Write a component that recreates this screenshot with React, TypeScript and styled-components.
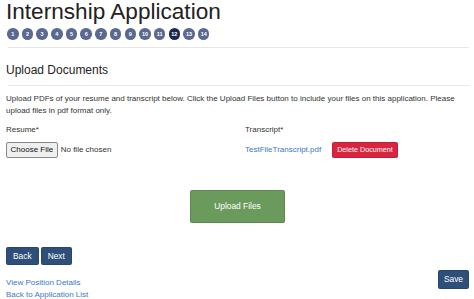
import styled, { createGlobalStyle } from "styled-components"

const GlobalStyle = createGlobalStyle`
  body {
    margin: 0;
    background: #fff;
    font-family: "Liberation Sans", Arial, sans-serif;
    color: #333;
  }
`

const Page = styled.div`
  width: 474px;
  height: 299px;
  overflow: hidden;
  padding: 0 5px 0 6px;
  box-sizing: border-box;
`

const Title = styled.h1`
  margin: 0;
  font-size: 22.6px;
  font-weight: 400;
  line-height: 24px;
  color: #222;
`

const Steps = styled.div`
  display: flex;
  gap: 3.2px;
  margin-top: 4px;
  padding-left: 1px;
`

const Step = styled.span<{ $active?: boolean }>`
  width: 11.5px;
  height: 11.5px;
  border-radius: 50%;
  background: ${(p) => (p.$active ? "#1b2a4c" : "#5a6990")};
  color: #fff;
  font-size: 5.5px;
  font-weight: 700;
  display: flex;
  align-items: center;
  justify-content: center;
`

const Rule = styled.hr`
  border: 0;
  border-top: 1px solid #e6e6e6;
  margin: 0 0 0 2px;
`

const Section = styled.h3`
  margin: 0;
  padding: 16px 0 8px;
  font-size: 12px;
  line-height: 13px;
  font-weight: 400;
  color: #222;
`

const Intro = styled.p`
  margin: 7px 0 0;
  font-size: 8px;
  line-height: 12.5px;
`

const Fields = styled.div`
  display: grid;
  grid-template-columns: 239px 1fr;
  margin-top: 6px;
`

const Field = styled.div`
  display: flex;
  flex-direction: column;
  gap: 6px;
`

const Label = styled.label`
  font-size: 8px;
  line-height: 12px;
`

const Line = styled.div`
  display: flex;
  align-items: center;
  height: 16px;
  font-size: 8px;
`

const ChooseBtn = styled.button`
  height: 16px;
  padding: 0 3.5px;
  font: inherit;
  font-size: 8px;
  background: #efefef;
  border: 1px solid #8a8a8a;
  border-radius: 2px;
  color: #111;
  margin-right: 3px;
`

const FileLink = styled.a`
  color: #3a78c9;
  text-decoration: none;
  margin-right: 11px;
`

const Btn = styled.button<{ $bg: string }>`
  font-family: inherit;
  background: ${(p) => p.$bg};
  color: #fff;
  border: 1px solid rgba(0, 0, 0, 0.12);
  border-radius: 2px;
  font-size: 8.4px;
  padding: 0 6px;
  height: 18px;
`

const DeleteBtn = styled(Btn)`
  height: 16px;
  font-size: 7.2px;
  padding: 0 4px;
`

const Center = styled.div`
  display: flex;
  justify-content: center;
  margin-top: 32px;
`

const UploadBtn = styled(Btn)`
  width: 95px;
  height: 33px;
`

const Nav = styled.div`
  display: flex;
  gap: 2px;
  margin-top: 24px;
`

const Footer = styled.div`
  display: flex;
  justify-content: space-between;
  align-items: flex-start;
  margin-top: 5px;
`

const Links = styled.div`
  display: flex;
  flex-direction: column;
  margin-top: 7px;
  font-size: 8px;
  line-height: 12px;
  a {
    color: #3a78c9;
    text-decoration: none;
  }
`

const SaveBtn = styled(Btn)`
  height: 19px;
  padding: 0 5px;
`

const steps = Array.from({ length: 14 }, (_, i) => i + 1)

export default function App() {
  return (
    <Page>
      <GlobalStyle />
      <Title>Internship Application</Title>
      <Steps>
        {steps.map((n) => (
          <Step key={n} $active={n === 12}>
            {n}
          </Step>
        ))}
      </Steps>
      <div style={{ height: 7 }} />
      <Rule />
      <Section>Upload Documents</Section>
      <Rule />
      <Intro>
        Upload PDFs of your resume and transcript below. Click the Upload Files button to
        include your files on this application. Please upload files in pdf format only.
      </Intro>
      <Fields>
        <Field>
          <Label>Resume*</Label>
          <Line>
            <ChooseBtn>Choose File</ChooseBtn>
            No file chosen
          </Line>
        </Field>
        <Field>
          <Label>Transcript*</Label>
          <Line>
            <FileLink href="#">TestFileTranscript.pdf</FileLink>
            <DeleteBtn $bg="#d9263e">Delete Document</DeleteBtn>
          </Line>
        </Field>
      </Fields>
      <Center>
        <UploadBtn $bg="#6b9b5c">Upload Files</UploadBtn>
      </Center>
      <Nav>
        <Btn $bg="#2f4f7b">Back</Btn>
        <Btn $bg="#2f4f7b">Next</Btn>
      </Nav>
      <Footer>
        <Links>
          <a href="#">View Position Details</a>
          <a href="#">Back to Application List</a>
        </Links>
        <SaveBtn $bg="#2f4f7b">Save</SaveBtn>
      </Footer>
    </Page>
  )
}
